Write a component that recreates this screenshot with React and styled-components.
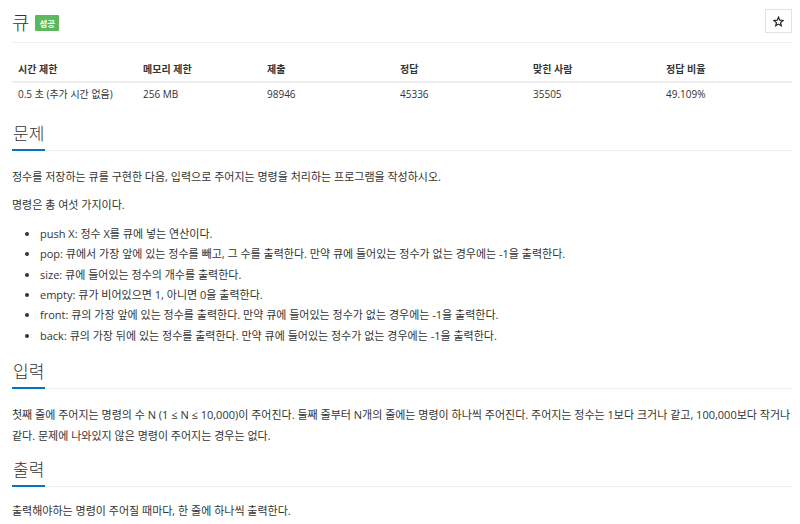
import React from 'react'
import styled, { createGlobalStyle } from 'styled-components'

const GlobalStyle = createGlobalStyle`
    body {
        margin: 0;
        background: #fff;
        font-family: "Open Sans", "Noto Sans CJK KR", sans-serif;
        color: #333;
    }
`

const Page = styled.div`
    padding: 5px 8px 0 12px;
`

const TitleRow = styled.div`
    display: flex;
    align-items: center;
    justify-content: space-between;
    height: 32px;
    padding-bottom: 5px;
    border-bottom: 1px solid #eee;
`

const TitleLeft = styled.div`
    display: flex;
    align-items: center;
    gap: 6px;
`

const Title = styled.h1`
    margin: 0;
    font-size: 19px;
    font-weight: 300;
    color: #333;
    font-family: "Noto Sans CJK KR", sans-serif;
`

const Badge = styled.span`
    background: #5cb85c;
    color: #fff;
    font-size: 8.5px;
    font-weight: 700;
    line-height: 10px;
    padding: 3px 4px;
    margin-top: 3px;
    border-radius: 1px;
    font-family: "Noto Sans CJK KR", sans-serif;
`

const StarButton = styled.button`
    width: 27px;
    height: 24px;
    padding: 0;
    border: 1px solid #e2e2e2;
    background: #fff;
    display: flex;
    align-items: center;
    justify-content: center;
`

const Table = styled.div`
    margin-top: 16px;
    display: grid;
    grid-template-columns: 125px 124px 133px 133px 133px 1fr;
    font-size: 10px;
`

const HeadCell = styled.div`
    padding: 5px 6px 6px;
    font-weight: 700;
    border-bottom: 2px solid #eee;
    height: 11px;
    line-height: 11px;
`

const Cell = styled.div`
    padding: 6px 6px;
    line-height: 11px;
`

const Section = styled.section`
    margin-top: ${p => p.$top}px;
`

const Heading = styled.div`
    display: flex;
    border-bottom: 1px solid #eee;
`

const HeadingText = styled.h2`
    margin: 0;
    font-size: 17px;
    font-weight: 300;
    color: #333;
    padding: 0 1px 3px;
    border-bottom: 2px solid #0076c0;
    margin-bottom: -1px;
    line-height: 24px;
`

const Body = styled.div`
    padding-top: ${p => p.$pad || 16}px;
    font-size: 11px;
    line-height: 20.4px;
    color: #333;
`

const Para = styled.p`
    margin: 0 0 8px;
`

const List = styled.ul`
    margin: 0;
    padding-left: 28px;
`

const Item = styled.li`
    padding-left: 0;
`

const StarIcon = () => (
    <svg width="11" height="11" viewBox="0 0 24 24" fill="none" stroke="#222" strokeWidth="2.6" strokeLinejoin="miter">
        <path d="M12 2.5l2.8 6.6 7.1.6-5.4 4.7 1.6 7-6.1-3.7-6.1 3.7 1.6-7L2.1 9.7l7.1-.6z" />
    </svg>
)

const App = () => {
    const stats = [
        ['시간 제한', '0.5 초 (추가 시간 없음)'],
        ['메모리 제한', '256 MB'],
        ['제출', '98946'],
        ['정답', '45336'],
        ['맞힌 사람', '35505'],
        ['정답 비율', '49.109%'],
    ]
    const ops = [
        'push X: 정수 X를 큐에 넣는 연산이다.',
        'pop: 큐에서 가장 앞에 있는 정수를 빼고, 그 수를 출력한다. 만약 큐에 들어있는 정수가 없는 경우에는 -1을 출력한다.',
        'size: 큐에 들어있는 정수의 개수를 출력한다.',
        'empty: 큐가 비어있으면 1, 아니면 0을 출력한다.',
        'front: 큐의 가장 앞에 있는 정수를 출력한다. 만약 큐에 들어있는 정수가 없는 경우에는 -1을 출력한다.',
        'back: 큐의 가장 뒤에 있는 정수를 출력한다. 만약 큐에 들어있는 정수가 없는 경우에는 -1을 출력한다.',
    ]
    return (
        <Page>
            <GlobalStyle />
            <TitleRow>
                <TitleLeft>
                    <Title>큐</Title>
                    <Badge>성공</Badge>
                </TitleLeft>
                <StarButton><StarIcon /></StarButton>
            </TitleRow>
            <Table>
                {stats.map(s => <HeadCell key={s[0]}>{s[0]}</HeadCell>)}
                {stats.map(s => <Cell key={s[0]}>{s[1]}</Cell>)}
            </Table>
            <Section $top={16}>
                <Heading><HeadingText>문제</HeadingText></Heading>
                <Body>
                    <Para>정수를 저장하는 큐를 구현한 다음, 입력으로 주어지는 명령을 처리하는 프로그램을 작성하시오.</Para>
                    <Para>명령은 총 여섯 가지이다.</Para>
                    <List>
                        {ops.map(o => <Item key={o}>{o}</Item>)}
                    </List>
                </Body>
            </Section>
            <Section $top={14}>
                <Heading><HeadingText>입력</HeadingText></Heading>
                <Body $pad={16}>
                    <Para>첫째 줄에 주어지는 명령의 수 N (1 ≤ N ≤ 10,000)이 주어진다. 둘째 줄부터 N개의 줄에는 명령이 하나씩 주어진다. 주어지는 정수는 1보다 크거나 같고, 100,000보다 작거나 같다. 문제에 나와있지 않은 명령이 주어지는 경우는 없다.</Para>
                </Body>
            </Section>
            <Section $top={12}>
                <Heading><HeadingText>출력</HeadingText></Heading>
                <Body $pad={14}>
                    <Para>출력해야하는 명령이 주어질 때마다, 한 줄에 하나씩 출력한다.</Para>
                </Body>
            </Section>
        </Page>
    )
}

export default App
